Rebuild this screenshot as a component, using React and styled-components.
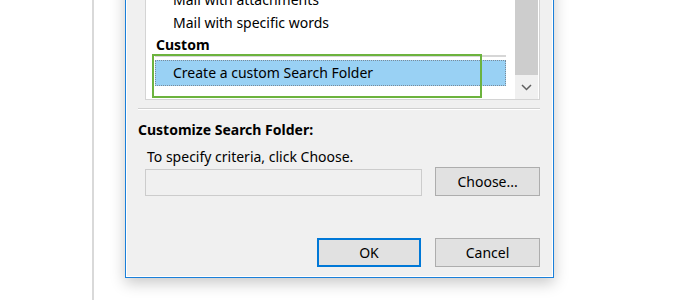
import React from "react";
import styled, { createGlobalStyle } from "styled-components";

const Global = createGlobalStyle`
  html, body { margin: 0; padding: 0; background: #ffffff; }
  body { font-family: "Noto Sans", "Open Sans", sans-serif; color: #000; }
`;

const Page = styled.div`
  width: 675px;
  height: 300px;
  overflow: hidden;
  display: flex;
  align-items: flex-start;
  background: #fff;
`;

const Divider = styled.div`
  width: 2px;
  height: 300px;
  margin-left: 92px;
  background: #d9d9d9;
  flex: none;
`;

const Dialog = styled.div`
  box-sizing: border-box;
  flex: none;
  width: 429px;
  margin-left: 31px;
  margin-top: -60px;
  height: 338px;
  background: #f0f0f0;
  border: 1px solid #1a7fd9;
  box-shadow: inset 0 0 0 1px #ffffff, 0 5px 14px rgba(0, 0, 0, 0.22);
  padding: 22px 13px 0 12px;
  display: flex;
  flex-direction: column;
`;

const ListBox = styled.div`
  box-sizing: border-box;
  margin-left: 7px;
  height: 137px;
  background: #fff;
  border: 1px solid #d4d4d4;
  display: flex;
`;

const ListContent = styled.div`
  position: relative;
  flex: 1;
  padding: 1px 9px 0 9px;
  font-size: 14px;
`;

const Item = styled.div`
  height: 23px;
  line-height: 23px;
  padding-left: 18px;
  white-space: nowrap;
`;

const GroupHeader = styled.div`
  height: 21px;
  line-height: 22px;
  padding-left: 1px;
  font-weight: 700;
  border-bottom: 2px solid #d6d6d6;
  margin-bottom: 3px;
`;

const SelectedItem = styled.div`
  box-sizing: border-box;
  height: 26px;
  line-height: 24px;
  padding-left: 17px;
  background: #99d1f4;
  border: 1px dotted #7a8a99;
  white-space: nowrap;
`;

const Highlight = styled.div`
  position: absolute;
  box-sizing: border-box;
  left: 6px;
  top: 90px;
  width: 330px;
  height: 44px;
  border: 2px solid #6cb33e;
  pointer-events: none;
`;

const ScrollBar = styled.div`
  width: 23px;
  margin-right: 1px;
  display: flex;
  flex-direction: column;
  background: #f0f0f0;
`;

const Thumb = styled.div`
  flex: 1;
  background: #cdcdcd;
`;

const ArrowButton = styled.div`
  height: 24px;
  display: flex;
  align-items: center;
  justify-content: center;
  background: #f0f0f0;
`;

const Separator = styled.div`
  height: 1px;
  margin-top: 8px;
  background: #d0d0d0;
  border-bottom: 1px solid #ffffff;
`;

const SectionTitle = styled.div`
  margin-top: 10px;
  height: 20px;
  line-height: 20px;
  font-size: 14px;
  font-weight: 700;
`;

const Hint = styled.div`
  margin-top: 7px;
  padding-left: 9px;
  height: 20px;
  line-height: 20px;
  font-size: 14px;
`;

const CriteriaRow = styled.div`
  display: flex;
  align-items: flex-end;
  padding-left: 7px;
`;

const TextField = styled.div`
  box-sizing: border-box;
  width: 278px;
  height: 27px;
  background: #f0f0f0;
  border: 1px solid #cccccc;
`;

const Button = styled.button`
  box-sizing: border-box;
  width: ${(p) => p.$w || 105}px;
  height: ${(p) => p.$h || 29}px;
  margin-left: ${(p) => p.$ml || 0}px;
  background: #e1e1e1;
  border: ${(p) => (p.$primary ? "2px solid #0078d7" : "1px solid #adadad")};
  font-family: "Noto Sans", "Open Sans", sans-serif;
  font-size: 14px;
  color: #000;
  padding: 0;
  display: flex;
  align-items: center;
  justify-content: center;
`;

const Footer = styled.div`
  margin-top: 42px;
  display: flex;
  justify-content: flex-end;
  gap: 14px;
`;

export default function App() {
  return (
    <>
      <Global />
      <Page>
        <Divider />
        <Dialog>
          <ListBox>
            <ListContent>
              <Item>Old mail</Item>
              <Item>Mail with attachments</Item>
              <Item>Mail with specific words</Item>
              <GroupHeader>Custom</GroupHeader>
              <SelectedItem>Create a custom Search Folder</SelectedItem>
              <Highlight />
            </ListContent>
            <ScrollBar>
              <Thumb />
              <ArrowButton>
                <svg width="11" height="7" viewBox="0 0 11 7">
                  <path d="M1 1 L5.5 5.5 L10 1" fill="none" stroke="#606060" strokeWidth="1.5" />
                </svg>
              </ArrowButton>
            </ScrollBar>
          </ListBox>
          <Separator />
          <SectionTitle>Customize Search Folder:</SectionTitle>
          <Hint>To specify criteria, click Choose.</Hint>
          <CriteriaRow>
            <TextField />
            <Button $ml={13} $w={105}>Choose...</Button>
          </CriteriaRow>
          <Footer>
            <Button $primary $w={104}>OK</Button>
            <Button $w={105}>Cancel</Button>
          </Footer>
        </Dialog>
      </Page>
    </>
  );
}
